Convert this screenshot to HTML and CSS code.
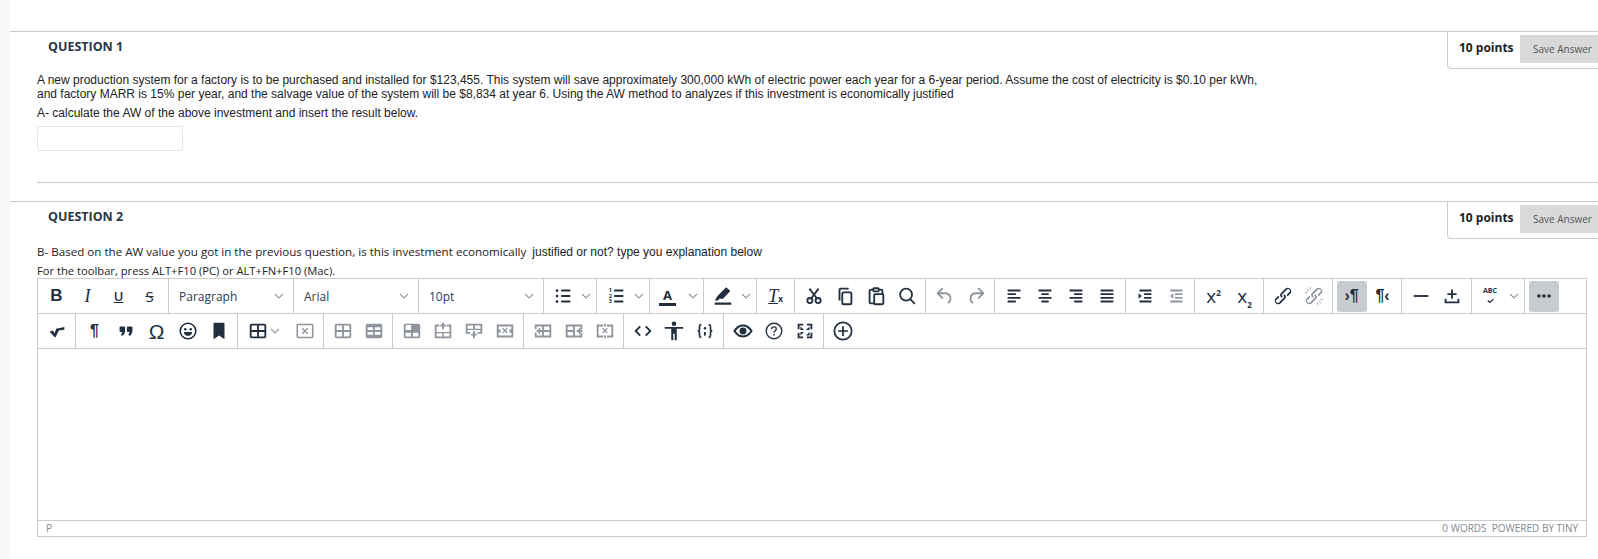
FILE: index.html
```html
<!DOCTYPE html>
<html lang="en">
<head>
<meta charset="utf-8">
<title>Question</title>
<link rel="stylesheet" href="styles.css">
</head>
<body>
<svg class="defs" width="0" height="0" aria-hidden="true">
  <symbol id="chev" viewBox="0 0 10 10"><path d="M1 3l4 4 4-4" fill="none" stroke="currentColor" stroke-width="1.1"/></symbol>
  <symbol id="list" viewBox="0 0 24 24"><path d="M10 5h10v2H10zM10 11h10v2H10zM10 17h10v2H10z"/><circle cx="5.500" cy="6" r="1.500"/><circle cx="5.500" cy="12" r="1.500"/><circle cx="5.500" cy="18" r="1.500"/></symbol>
  <symbol id="marker" viewBox="0 0 24 24"><path d="M3 19h18v2.500H3zM15.500 2.500l4.500 4-8 8.500H8l-1.500 2H3l3-5z"/></symbol>
  <symbol id="cut" viewBox="0 0 24 24"><g fill="none" stroke="currentColor" stroke-width="2"><circle cx="7.500" cy="17" r="2.800"/><circle cx="16.500" cy="17" r="2.800"/><path d="M9 14.500L17 4M15 14.500L7 4"/></g></symbol>
  <symbol id="copy" viewBox="0 0 24 24"><g fill="none" stroke="currentColor" stroke-width="2"><rect x="9" y="8" width="10" height="13" rx="1.500"/><path d="M6 17V5.500C6 4.700 6.700 4 7.500 4H16"/></g></symbol>
  <symbol id="paste" viewBox="0 0 24 24"><g fill="none" stroke="currentColor" stroke-width="2"><path d="M9 5H6.500C5.700 5 5 5.700 5 6.500v12c0 .8.7 1.500 1.500 1.500H10M15 5h2.500c.8 0 1.500.7 1.500 1.500V10"/><rect x="10" y="10" width="10" height="11" rx="1"/><rect x="9" y="3.500" width="6" height="3.500" rx="1"/></g></symbol>
  <symbol id="search" viewBox="0 0 24 24"><g fill="none" stroke="currentColor" stroke-width="2"><circle cx="11" cy="10.500" r="6.500"/><path d="M15.500 15.500l5 5"/></g></symbol>
  <symbol id="undo" viewBox="0 0 24 24"><path d="M6.400 8H12c3.700 0 6.200 2 6.800 5.100.6 2.700-.4 5.600-2.300 6.800a1 1 0 0 1-1-1.800c1.100-.7 1.800-2.700 1.400-4.600-.5-2.100-2.100-3.500-4.900-3.500H6.400l3.300 3.300a1 1 0 1 1-1.400 1.400l-5-5a1 1 0 0 1 0-1.400l5-5a1 1 0 0 1 1.400 1.400L6.400 8z"/></symbol>
  <symbol id="redo" viewBox="0 0 24 24"><path transform="matrix(-1 0 0 1 24 0)" d="M6.400 8H12c3.700 0 6.200 2 6.800 5.100.6 2.700-.4 5.600-2.300 6.800a1 1 0 0 1-1-1.800c1.100-.7 1.800-2.700 1.400-4.600-.5-2.100-2.100-3.500-4.900-3.500H6.400l3.300 3.300a1 1 0 1 1-1.400 1.400l-5-5a1 1 0 0 1 0-1.400l5-5a1 1 0 0 1 1.400 1.400L6.400 8z"/></symbol>
  <symbol id="al" viewBox="0 0 24 24"><path d="M5 5h14v2H5zM5 9h9v2H5zM5 13h14v2H5zM5 17h9v2H5z"/></symbol>
  <symbol id="ac" viewBox="0 0 24 24"><path d="M5 5h14v2H5zM8 9h8v2H8zM5 13h14v2H5zM8 17h8v2H8z"/></symbol>
  <symbol id="ar" viewBox="0 0 24 24"><path d="M5 5h14v2H5zM10 9h9v2h-9zM5 13h14v2H5zM10 17h9v2h-9z"/></symbol>
  <symbol id="aj" viewBox="0 0 24 24"><path d="M5 5h14v2H5zM5 9h14v2H5zM5 13h14v2H5zM5 17h14v2H5z"/></symbol>
  <symbol id="indent" viewBox="0 0 24 24"><path d="M6 5h13v2H6zM11 9h8v2h-8zM11 13h8v2h-8zM6 17h13v2H6zM5 9l3.500 3L5 15z"/></symbol>
  <symbol id="outdent" viewBox="0 0 24 24"><path d="M6 5h13v2H6zM11 9h8v2h-8zM11 13h8v2h-8zM6 17h13v2H6zM9 9l-3.500 3L9 15z"/></symbol>
  <symbol id="link" viewBox="0 0 24 24"><path d="M6.200 12.300a1 1 0 0 1 1.400 1.400l-2.100 2a2 2 0 1 0 2.700 2.800l4.800-4.800a1 1 0 0 0 0-1.400 1 1 0 1 1 1.400-1.300 2.900 2.900 0 0 1 0 4L9.600 20a3.900 3.900 0 0 1-5.500-5.500l2-2zm11.600-.6a1 1 0 0 1-1.400-1.400l2-2a2 2 0 1 0-2.600-2.800L11 10.300a1 1 0 0 0 0 1.400A1 1 0 1 1 9.600 13a2.900 2.900 0 0 1 0-4L14.400 4a3.900 3.900 0 0 1 5.500 5.500l-2 2z"/></symbol>
  <symbol id="unlink" viewBox="0 0 24 24"><path d="M6.200 12.300a1 1 0 0 1 1.400 1.400l-2.100 2a2 2 0 1 0 2.700 2.800l4.800-4.800a1 1 0 0 0 0-1.400 1 1 0 1 1 1.400-1.300 2.900 2.900 0 0 1 0 4L9.600 20a3.900 3.900 0 0 1-5.500-5.500l2-2zm11.600-.6a1 1 0 0 1-1.400-1.400l2-2a2 2 0 1 0-2.600-2.800L11 10.300a1 1 0 0 0 0 1.400A1 1 0 1 1 9.600 13a2.900 2.900 0 0 1 0-4L14.400 4a3.900 3.900 0 0 1 5.500 5.500l-2 2z"/><path d="M4 4l2.500 2.500M8 2.500V5M2.500 8H5M20 20l-2.500-2.500M16 21.500V19M21.500 16H19" fill="none" stroke="currentColor"/></symbol>
  <symbol id="hr" viewBox="0 0 24 24"><path d="M4 11h16v2H4z"/></symbol>
  <symbol id="insert" viewBox="0 0 24 24"><path d="M11 5h2v4h4v2h-4v4h-2v-4H7V9h4zM4 15h2v3h12v-3h2v5H4z"/></symbol>
  <symbol id="check" viewBox="0 0 24 24"><path d="M5 13l2-2 3.500 3L18 8l1.500 2-9 8z"/></symbol>
  <symbol id="more" viewBox="0 0 24 24"><circle cx="6.500" cy="12" r="2"/><circle cx="12" cy="12" r="2"/><circle cx="17.500" cy="12" r="2"/></symbol>
  <symbol id="quote" viewBox="0 0 24 24"><path d="M7.500 17h.9c.4 0 .7-.2.9-.6L11 13V8c0-.6-.4-1-1-1H6a1 1 0 0 0-1 1v4c0 .6.400 1 1 1h2l-1.300 2.700a1 1 0 0 0 .8 1.300zm8 0h.9c.4 0 .7-.2.9-.6L19 13V8c0-.6-.4-1-1-1h-4a1 1 0 0 0-1 1v4c0 .6.400 1 1 1h2l-1.300 2.700a1 1 0 0 0 .8 1.300z"/></symbol>
  <symbol id="smile" viewBox="0 0 24 24"><circle cx="12" cy="12" r="8.500" fill="none" stroke="currentColor" stroke-width="1.800"/><circle cx="9" cy="10" r="1.400"/><circle cx="15" cy="10" r="1.400"/><path d="M7.500 13h9c0 2.500-2 4.300-4.500 4.300S7.500 15.500 7.500 13z"/></symbol>
  <symbol id="bookmark" viewBox="0 0 24 24"><path d="M6 4v17l6-4 6 4V4c0-.6-.4-1-1-1H7a1 1 0 0 0-1 1z"/></symbol>
  <symbol id="grid" viewBox="0 0 24 24"><path fill-rule="evenodd" d="M19 4a2 2 0 0 1 2 2v12a2 2 0 0 1-2 2H5a2 2 0 0 1-2-2V6c0-1.100.9-2 2-2h14zM5 13v5h6v-5H5zm14 0h-6v5h6v-5zm0-7h-6v5h6V6zM5 11h6V6H5v5z"/></symbol>
  <symbol id="tdel" viewBox="0 0 24 24"><rect x="3.500" y="5" width="17" height="14" rx="1" fill="none" stroke="currentColor" stroke-width="1.600"/><path d="M9 9l6 6M15 9l-6 6" fill="none" stroke="currentColor" stroke-width="1.500"/></symbol>
  <symbol id="trows" viewBox="0 0 24 24"><path fill-rule="evenodd" d="M19 4a2 2 0 0 1 2 2v12a2 2 0 0 1-2 2H5a2 2 0 0 1-2-2V6c0-1.100.9-2 2-2h14zM5 13v3h6v-3zm8 0v3h6v-3zM5 8v3h6V8zm8 0v3h6V8z"/></symbol>
  <symbol id="tcell" viewBox="0 0 24 24"><path fill-rule="evenodd" d="M19 4a2 2 0 0 1 2 2v12a2 2 0 0 1-2 2H5a2 2 0 0 1-2-2V6c0-1.100.9-2 2-2h14zM5 5.500V11h6V5.500zM5 14v4h6v-4zm8 0v4h6v-4z"/></symbol>
  <symbol id="tplustop" viewBox="0 0 24 24"><path d="M3 5h5v2H5v11h14V7h-3V5h5v15H3zM5 13h14v1.500H5zM11.200 14h1.600v4h-1.600zM11 5V3h2v2h2v2h-2v3h-2V7H9V5z"/></symbol>
  <symbol id="tplusbot" viewBox="0 0 24 24"><path d="M3 4h18v11h-5v-2h3V6h-6v4h-2V6H5v7h3v2H3zM4 9.500h16V11H4zM11 12h2v3h2v2h-2v3h-2v-3H9v-2h2z"/></symbol>
  <symbol id="txrow" viewBox="0 0 24 24"><path d="M3 5h18v2H5v3h2v4H5v3h14v-3h-2v-4h2V7h2v12H3zM9 9.500l1-1 2 2 2-2 1 1-2 2 2 2-1 1-2-2-2 2-1-1 2-2z"/></symbol>
  <symbol id="tplusl" viewBox="0 0 24 24"><path d="M3 5h18v14H3v-5h2v3h6V7H5v3H3zM13 7v4h6V7zm0 6v4h6v-4zM5 11h2V9h2v2h2v2H9v2H7v-2H5z"/></symbol>
  <symbol id="tplusr" viewBox="0 0 24 24"><path d="M3 5h18v5h-2V7h-6v10h6v-3h2v5H3zm2 2v4h6V7zm0 6v4h6v-4zM15 11h2V9h2v2h2v2h-2v2h-2v-2h-2z"/></symbol>
  <symbol id="txcol" viewBox="0 0 24 24"><path d="M3 5h7v2H5v10h5v2H3zM14 5h7v14h-7v-2h5V7h-5zM11 4h2v3h-2zM11 17h2v3h-2zM9 9.500l1-1 2 2 2-2 1 1-2 2 2 2-1 1-2-2-2 2-1-1 2-2z"/></symbol>
  <symbol id="code" viewBox="0 0 24 24"><path d="M9 7l-5 5 5 5M15 7l5 5-5 5" fill="none" stroke="currentColor" stroke-width="2"/></symbol>
  <symbol id="person" viewBox="0 0 24 24"><circle cx="12" cy="4" r="2.500"/><path d="M2 7.500h20v2h-7V22h-2.200v-7h-1.600v7H9V9.500H2z"/></symbol>
  <symbol id="braces" viewBox="0 0 24 24"><path d="M8 5C6 5 6 6 6 8v2c0 1-.5 2-2 2 1.500 0 2 1 2 2v2c0 2 0 3 2 3M16 5c2 0 2 1 2 3v2c0 1 .5 2 2 2-1.500 0-2 1-2 2v2c0 2 0 3-2 3" fill="none" stroke="currentColor" stroke-width="1.800"/><circle cx="12" cy="9" r="1.400"/><path d="M11 13h2v3l-1 1.500-1-.5z"/></symbol>
  <symbol id="eye" viewBox="0 0 24 24"><path fill-rule="evenodd" d="M12 5c4.500 0 8.300 2.900 10.500 7-2.200 4.100-6 7-10.500 7S3.700 16.100 1.500 12C3.700 7.900 7.500 5 12 5zm0 2.200c-3.300 0-6 2-8 4.800 2 2.800 4.700 4.800 8 4.800s6-2 8-4.800c-2-2.800-4.700-4.800-8-4.800z"/><circle cx="12" cy="12" r="3.800"/></symbol>
  <symbol id="help" viewBox="0 0 24 24"><circle cx="12" cy="12" r="8.500" fill="none" stroke="currentColor" stroke-width="1.500"/><path d="M9.500 10c0-1.500 1.100-2.500 2.500-2.500s2.500 1 2.500 2.300c0 2-2.500 2-2.500 4" fill="none" stroke="currentColor" stroke-width="1.500"/><circle cx="12" cy="16" r="1"/></symbol>
  <symbol id="full" viewBox="0 0 24 24"><path d="M4 4h6v2H6v4H4zM14 4h6v6h-2V6h-4zM4 14h2v4h4v2H4zM18 14h2v6h-6v-2h4zM7 7l4 4H7zM17 7v4h-4zM7 17v-4h4zM17 17h-4l4-4z"/></symbol>
  <symbol id="pluscircle" viewBox="0 0 24 24"><circle cx="12" cy="12" r="8" fill="none" stroke="currentColor" stroke-width="1.600"/><path d="M7.500 11.200h9v1.600h-9zM11.200 7.500h1.600v9h-1.600z"/></symbol>
  <symbol id="a11ycheck" viewBox="0 0 24 24"><path d="M4 12.500l3.500-1 2 3 1.500-5 9-2v3l-6 1-3.500 7H9z"/></symbol>
</svg>

<main class="page">
  <section class="question">
    <header class="q-head">
      <h2 class="q-title">QUESTION 1</h2>
      <div class="q-score"><span class="points">10 points</span><span class="save">Save Answer</span></div>
    </header>
    <div class="q-body">
      <p class="arial">A new production system for a factory is to be purchased and installed for $123,455. This system will save approximately 300,000 kWh of electric power each year for a 6-year period. Assume the cost of electricity is $0.10 per kWh,<br>and factory MARR is 15% per year, and the salvage value of the system will be $8,834 at year 6. Using the AW method to analyzes if this investment is economically justified</p>
      <p class="arial second">A- calculate the AW of the above investment and insert the result below.</p>
      <div class="answer-input"></div>
      <hr class="divider">
    </div>
  </section>

  <section class="question">
    <header class="q-head">
      <h2 class="q-title">QUESTION 2</h2>
      <div class="q-score"><span class="points">10 points</span><span class="save">Save Answer</span></div>
    </header>
    <div class="q-body">
      <p class="lead">B- Based on the AW value you got in the previous question, is this investment economically&nbsp; <span class="arial">justified or not? type you explanation below</span></p>
      <p class="hint">For the toolbar, press ALT+F10 (PC) or ALT+FN+F10 (Mac).</p>
      <div class="editor">
        <div class="tb-row">
          <div class="grp"><span class="btn bold">B</span><span class="btn ital">I</span><span class="btn under">U</span><span class="btn strike">S</span></div>
          <div class="grp sel"><span>Paragraph</span><svg class="chev"><use href="#chev"/></svg></div>
          <div class="grp sel"><span>Arial</span><svg class="chev"><use href="#chev"/></svg></div>
          <div class="grp sel"><span>10pt</span><svg class="chev"><use href="#chev"/></svg></div>
          <div class="grp split"><svg class="ic"><use href="#list"/></svg><svg class="chev"><use href="#chev"/></svg></div>
          <div class="grp split"><svg class="ic" viewBox="0 0 24 24"><path d="M10 5h10v2H10zM10 11h10v2H10zM10 17h10v2H10z"/><text x="4" y="8" class="tiny">1</text><text x="4" y="14" class="tiny">2</text><text x="4" y="20" class="tiny">3</text></svg><svg class="chev"><use href="#chev"/></svg></div>
          <div class="grp split wide"><span class="fore">A</span><svg class="chev"><use href="#chev"/></svg></div>
          <div class="grp split"><svg class="ic"><use href="#marker"/></svg><svg class="chev"><use href="#chev"/></svg></div>
          <div class="grp one"><span class="btn"><span class="clearfmt"><i class="clear-t">T</i><small>x</small></span></span></div>
          <div class="grp"><span class="btn"><svg class="ic"><use href="#cut"/></svg></span><span class="btn"><svg class="ic"><use href="#copy"/></svg></span><span class="btn"><svg class="ic"><use href="#paste"/></svg></span><span class="btn"><svg class="ic"><use href="#search"/></svg></span></div>
          <div class="grp"><span class="btn off"><svg class="ic"><use href="#undo"/></svg></span><span class="btn off"><svg class="ic"><use href="#redo"/></svg></span></div>
          <div class="grp"><span class="btn"><svg class="ic"><use href="#al"/></svg></span><span class="btn"><svg class="ic"><use href="#ac"/></svg></span><span class="btn"><svg class="ic"><use href="#ar"/></svg></span><span class="btn"><svg class="ic"><use href="#aj"/></svg></span></div>
          <div class="grp"><span class="btn"><svg class="ic"><use href="#indent"/></svg></span><span class="btn off"><svg class="ic"><use href="#outdent"/></svg></span></div>
          <div class="grp"><span class="btn"><span class="script">x<sup>2</sup></span></span><span class="btn"><span class="script">x<sub>2</sub></span></span></div>
          <div class="grp"><span class="btn"><svg class="ic"><use href="#link"/></svg></span><span class="btn off"><svg class="ic"><use href="#unlink"/></svg></span></div>
          <div class="grp"><span class="btn active pil">›¶</span><span class="btn pil">¶‹</span></div>
          <div class="grp wide"><span class="btn"><svg class="ic"><use href="#hr"/></svg></span><span class="btn"><svg class="ic"><use href="#insert"/></svg></span></div>
          <div class="grp split"><span class="abc">ABC<svg class="abc-check"><use href="#check"/></svg></span><svg class="chev"><use href="#chev"/></svg></div>
          <div class="grp last"><span class="btn active"><svg class="ic"><use href="#more"/></svg></span></div>
        </div>
        <div class="tb-row">
          <div class="grp"><span class="btn"><svg class="ic"><use href="#a11ycheck"/></svg></span></div>
          <div class="grp"><span class="btn pil">¶</span><span class="btn"><svg class="ic"><use href="#quote"/></svg></span><span class="btn omega">Ω</span><span class="btn"><svg class="ic"><use href="#smile"/></svg></span><span class="btn"><svg class="ic"><use href="#bookmark"/></svg></span></div>
          <div class="grp"><span class="btn tbl"><svg class="ic"><use href="#grid"/></svg><svg class="chev"><use href="#chev"/></svg></span><span class="btn off"><svg class="ic"><use href="#tdel"/></svg></span></div>
          <div class="grp"><span class="btn off"><svg class="ic"><use href="#grid"/></svg></span><span class="btn off"><svg class="ic"><use href="#trows"/></svg></span></div>
          <div class="grp"><span class="btn off"><svg class="ic"><use href="#tcell"/></svg></span><span class="btn off"><svg class="ic"><use href="#tplustop"/></svg></span><span class="btn off"><svg class="ic"><use href="#tplusbot"/></svg></span><span class="btn off"><svg class="ic"><use href="#txrow"/></svg></span></div>
          <div class="grp"><span class="btn off"><svg class="ic"><use href="#tplusl"/></svg></span><span class="btn off"><svg class="ic"><use href="#tplusr"/></svg></span><span class="btn off"><svg class="ic"><use href="#txcol"/></svg></span></div>
          <div class="grp"><span class="btn"><svg class="ic"><use href="#code"/></svg></span><span class="btn"><svg class="ic"><use href="#person"/></svg></span><span class="btn"><svg class="ic"><use href="#braces"/></svg></span></div>
          <div class="grp"><span class="btn"><svg class="ic"><use href="#eye"/></svg></span><span class="btn"><svg class="ic"><use href="#help"/></svg></span><span class="btn"><svg class="ic"><use href="#full"/></svg></span></div>
          <div class="grp last"><span class="btn"><svg class="ic big"><use href="#pluscircle"/></svg></span></div>
        </div>
        <div class="edit-area"></div>
        <div class="status"><span>P</span><span>0 WORDS&nbsp; POWERED BY TINY</span></div>
      </div>
    </div>
  </section>
</main>
</body>
</html>
```
FILE: styles.css
```css
* { box-sizing: border-box; }
html, body { margin: 0; padding: 0; }
body {
  background: #fff;
  height: 559px;
  overflow: hidden;
  font-family: "Open Sans", sans-serif;
  color: #222f3e;
}
.defs { position: absolute; }
.tiny { font: 700 6px "Open Sans", sans-serif; }
.page {
  margin-left: 10px;
  padding-top: 31px;
  height: 559px;
  box-shadow: -10px 0 0 #f7f7f7;
}
.question { border-top: 1px solid #ccc; }
.question + .question { margin-top: 18px; }
.q-head { display: flex; justify-content: space-between; height: 37px; }
.q-title {
  margin: 0;
  padding: 7px 0 0 38px;
  font-size: 12.5px;
  line-height: 16px;
  font-weight: 700;
  color: #2b3644;
}
.q-score {
  width: 151px;
  border-left: 1px solid #ccc;
  border-bottom: 1px solid #ccc;
  border-bottom-left-radius: 4px;
  display: flex;
  padding: 3px 0 5px 11px;
  justify-content: space-between;
  align-items: stretch;
}
.points { font-size: 12px; font-weight: 700; line-height: 28px; color: #222; margin-top: -1px; }
.save {
  width: 78px;
  background: #d9d9d9;
  color: #555;
  font-size: 10px;
  line-height: 28px;
  padding-left: 13px;
  white-space: nowrap;
}
.q-body { padding: 4px 0 0 27px; }
.q-body p { margin: 0; font-size: 12px; line-height: 14px; color: #222; }
.arial { font-family: "Liberation Sans", Arial, sans-serif; }
.arial.second { margin-top: 5px; }
.answer-input {
  width: 146px;
  height: 25px;
  margin-top: 6px;
  border: 1px solid #e6e6e6;
  border-radius: 3px;
}
.divider { border: 0; border-top: 1px solid #ccc; margin: 31px 0 0; }
.q-body .lead { margin-top: 2px; font-size: 11.6px; white-space: nowrap; }
.q-body .lead .arial { font-size: 12px; }
.q-body .hint { margin-top: 5px; font-size: 11.2px; }

.editor { border: 1px solid #ccc; width: 1550px; height: 259px; display: flex; flex-direction: column; }
.tb-row { display: flex; height: 35px; border-bottom: 1px solid #ccc; flex: none; }
.grp {
  display: flex;
  align-items: center;
  padding: 0 3px;
  border-right: 1px solid #ccc;
  flex: none;
  font-size: 12px;
  color: #222f3e;
}
.grp.wide { padding: 0 3.5px; }
.grp.last { border-right: 0; }
.btn {
  width: 31px;
  height: 30px;
  display: flex;
  align-items: center;
  justify-content: center;
  border-radius: 3px;
  flex: none;
}
.btn.off { color: #8e959d; }
.btn.active { background: #c8cbcf; width: 30px; height: 31px; margin: 0 .5px; }
.ic { width: 22px; height: 22px; fill: currentColor; flex: none; }
.ic.big { width: 26px; height: 26px; }
.chev { width: 10px; height: 10px; color: #999; flex: none; }
.bold { font: 700 17px "Liberation Sans", sans-serif; }
.ital { font: italic 400 18px "Liberation Serif", serif; }
.under { font: 600 13px "Open Sans", sans-serif; text-decoration: underline; }
.strike { font: 400 15px "Open Sans", sans-serif; text-decoration: line-through; }
.sel {
  width: 125px;
  padding: 0 10px;
  justify-content: space-between;
  font-size: 12px;
  color: #2f3c4b;
}
.sel .chev { margin-right: -1px; }
.split { width: 53px; padding: 0 5px 0 8px; justify-content: space-between; }
.split.wide { width: 54px; padding: 0 5px 0 9px; }
.one { width: 38px; justify-content: center; }
.fore {
  width: 17px;
  text-align: center;
  font: 700 13px/15px "Open Sans", sans-serif;
  border-bottom: 3px solid #222f3e;
  margin-top: 1px;
}
.clearfmt { display: block; font-size: 17px; line-height: 20px; }
.clear-t { font: italic 400 18px/18px "Liberation Serif", serif; text-decoration: underline; }
.clearfmt small { font: 700 8px/1 "Open Sans", sans-serif; }
.script { display: block; font: 400 19px/1 "Open Sans", sans-serif; }
.script sup, .script sub { font-size: 8px; font-weight: 700; line-height: 0; }
.pil { font: 700 16px/1 "Liberation Sans", sans-serif; }
.omega { font: 400 21px/1 "Liberation Sans", sans-serif; }
.abc {
  width: 20px;
  display: flex;
  flex-direction: column;
  align-items: center;
  font: 700 7px/8px "Open Sans", sans-serif;
}
.abc-check { width: 13px; height: 11px; fill: currentColor; }
.tbl { gap: 1px; width: 44px; margin-right: 4px; }
.edit-area { flex: 1; }
.status {
  flex: none;
  height: 16px;
  border-top: 1px solid #ccc;
  display: flex;
  justify-content: space-between;
  padding: 0 8px;
  font-size: 10px;
  line-height: 15px;
  color: #7f8790;
}
```
